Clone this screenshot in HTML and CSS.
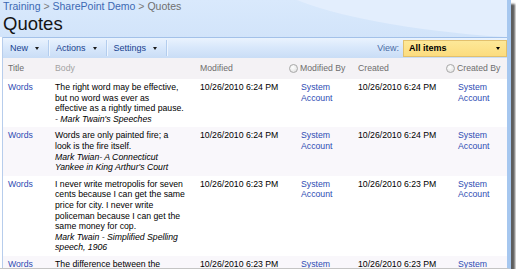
FILE: index.html
```html
<!DOCTYPE html>
<html lang="en">

<head>
  <meta charset="UTF-8">
  <title>Quotes</title>
  <link rel="stylesheet" href="styles.css">
</head>

<body>
  <div class="window">
    <div class="site-head">
      <div class="crumbs">
        <a href="#">Training</a> <span class="sep">&gt;</span>
        <a href="#">SharePoint Demo</a> <span class="sep">&gt;</span>
        <span class="here">Quotes</span>
      </div>
      <h1>Quotes</h1>
    </div>

    <div class="list">
      <div class="toolbar">
        <div class="menu">New<i class="caret"></i></div>
        <div class="menu">Actions<i class="caret"></i></div>
        <div class="menu">Settings<i class="caret"></i></div>
        <div class="view">
          <span class="view-label">View:</span>
          <div class="view-select"><b>All items</b><i class="caret"></i></div>
        </div>
      </div>

      <table class="items">
        <colgroup>
          <col class="c-title">
          <col class="c-body">
          <col class="c-date">
          <col class="c-user">
          <col class="c-date2">
          <col class="c-user2">
        </colgroup>
        <thead>
          <tr>
            <th>Title</th>
            <th class="plain">Body</th>
            <th>Modified</th>
            <th><span class="presence"></span>Modified By</th>
            <th>Created</th>
            <th><span class="presence"></span>Created By</th>
          </tr>
        </thead>
        <tbody>
          <tr>
            <td><a href="#">Words</a></td>
            <td>The right word may be effective,<br>but no word was ever as<br>effective as a rightly timed pause.<br><em>- Mark Twain's Speeches</em></td>
            <td class="date">10/26/2010 6:24 PM</td>
            <td class="user"><a href="#">System Account</a></td>
            <td class="date">10/26/2010 6:24 PM</td>
            <td class="user"><a href="#">System Account</a></td>
          </tr>
          <tr class="alt">
            <td><a href="#">Words</a></td>
            <td>Words are only painted fire; a<br>look is the fire itself.<br><em>Mark Twian- A Connecticut<br>Yankee in King Arthur's Court</em></td>
            <td class="date">10/26/2010 6:24 PM</td>
            <td class="user"><a href="#">System Account</a></td>
            <td class="date">10/26/2010 6:24 PM</td>
            <td class="user"><a href="#">System Account</a></td>
          </tr>
          <tr>
            <td><a href="#">Words</a></td>
            <td>I never write metropolis for seven<br>cents because I can get the same<br>price for city. I never write<br>policeman because I can get the<br>same money for cop.<br><em>Mark Twain - Simplified Spelling<br>speech, 1906</em></td>
            <td class="date">10/26/2010 6:23 PM</td>
            <td class="user"><a href="#">System Account</a></td>
            <td class="date">10/26/2010 6:23 PM</td>
            <td class="user"><a href="#">System Account</a></td>
          </tr>
          <tr class="alt">
            <td><a href="#">Words</a></td>
            <td>The difference between the<br>almost right word and the right</td>
            <td class="date">10/26/2010 6:23 PM</td>
            <td class="user"><a href="#">System Account</a></td>
            <td class="date">10/26/2010 6:23 PM</td>
            <td class="user"><a href="#">System Account</a></td>
          </tr>
        </tbody>
      </table>
    </div>
  </div>
</body>

</html>
```

FILE: styles.css
```css
body {
  margin: 0;
  padding: 0;
  background-color: #fff;
  font-family: "Liberation Sans", Arial, sans-serif;
}

a {
  text-decoration: none;
}

.window {
  width: 507px;
  height: 268px;
  border-right: 4px solid #a6c7ef;
  border-bottom: 1px solid #c4c4c4;
  box-shadow: 4px 4px 2px #5e5e5e;
  overflow: hidden;
  background-color: #fff;
}

/* site header */
.site-head {
  position: relative;
  height: 37px;
  padding-left: 3px;
  background: linear-gradient(#d9e9fc, #d2e4fa);
  overflow: hidden;
}

.site-head::before {
  content: "";
  position: absolute;
  left: 250px;
  top: -120px;
  width: 700px;
  height: 160px;
  border-radius: 50%;
  background-color: #e3eefd;
}

.crumbs {
  position: relative;
  height: 12px;
  line-height: 12px;
  font-size: 10.5px;
  color: #7a7a7a;
}

.crumbs a {
  color: #3d69b3;
}

.crumbs .here {
  color: #6f6f6f;
}

.site-head h1 {
  position: relative;
  margin: 1px 0 0;
  line-height: 22px;
  font-size: 18.5px;
  font-weight: normal;
  color: #141414;
}

/* list */
.list {
  margin-left: 2px;
  border-left: 1px solid #b7cdec;
}

.toolbar {
  display: flex;
  align-items: center;
  height: 20px;
  border-top: 1px solid #a3c1e9;
  background: linear-gradient(#eaf3fe, #d9e8fb 45%, #c9ddf6);
  font-size: 9px;
  color: #17418f;
}

.menu {
  display: flex;
  align-items: center;
  height: 16px;
  padding: 0 9px 0 7px;
  border-right: 1px solid #b3cdee;
  box-shadow: 1px 0 0 #eef5fe;
}

.caret {
  display: inline-block;
  margin-left: 7px;
  border-left: 2.5px solid transparent;
  border-right: 2.5px solid transparent;
  border-top: 3px solid #1b1b1b;
}

.view {
  display: flex;
  align-items: center;
  margin-left: auto;
}

.view-label {
  color: #4a6ca6;
  margin-right: 4px;
}

.view-select {
  display: flex;
  align-items: center;
  justify-content: space-between;
  box-sizing: border-box;
  width: 104px;
  height: 17px;
  padding: 0 6px 0 5px;
  border: 1px solid #e2c06d;
  background: linear-gradient(#fde898, #fcdc7e);
  color: #000;
}

.view-select .caret {
  border-top-color: #000;
}

.items {
  width: 504px;
  table-layout: fixed;
  border-collapse: collapse;
  font-size: 8.7px;
  line-height: 10.6px;
}

.c-title { width: 47px; }
.c-body { width: 145px; }
.c-date { width: 89px; }
.c-user { width: 69px; }
.c-date2 { width: 88px; }
.c-user2 { width: 66px; }

.items th {
  height: 21px;
  padding: 0 0 0 5px;
  background-color: #f4f2f5;
  font-weight: normal;
  text-align: left;
  white-space: nowrap;
  color: #6e6e6e;
}

.items th.plain {
  color: #a3a3a3;
}

.presence {
  display: inline-block;
  box-sizing: border-box;
  width: 9px;
  height: 9px;
  margin-right: 2px;
  vertical-align: -2px;
  border: 1px solid #a9a9a9;
  border-radius: 50%;
  background: radial-gradient(circle at 40% 35%, #fff, #dcdcdc);
}

.items td {
  padding: 3px 0 3px 5px;
  vertical-align: top;
  color: #000;
}

.items td a {
  color: #2e4cb3;
}

.items td.user {
  padding-left: 17px;
}

.items td.date {
  white-space: nowrap;
}

.items tr.alt td {
  background-color: #f9f7fb;
}
```
